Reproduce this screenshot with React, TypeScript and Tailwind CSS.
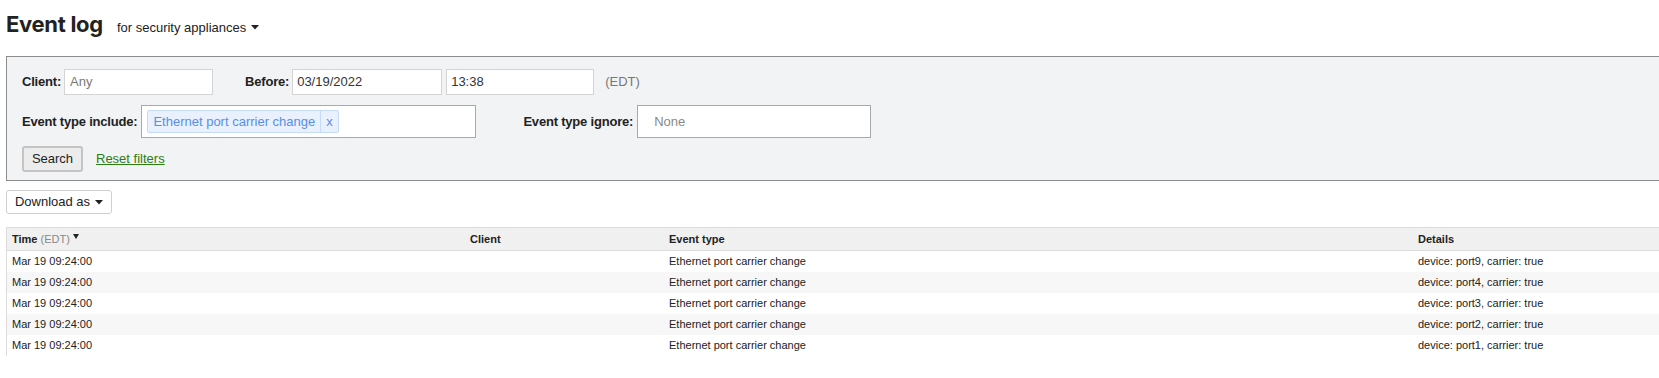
import React from "react";

type EventRow = {
    time: string;
    client: string;
    type: string;
    details: string;
};

const rows: EventRow[] = [
    { time: "Mar 19 09:24:00", client: "", type: "Ethernet port carrier change", details: "device: port9, carrier: true" },
    { time: "Mar 19 09:24:00", client: "", type: "Ethernet port carrier change", details: "device: port4, carrier: true" },
    { time: "Mar 19 09:24:00", client: "", type: "Ethernet port carrier change", details: "device: port3, carrier: true" },
    { time: "Mar 19 09:24:00", client: "", type: "Ethernet port carrier change", details: "device: port2, carrier: true" },
    { time: "Mar 19 09:24:00", client: "", type: "Ethernet port carrier change", details: "device: port1, carrier: true" },
];

function Caret() {
    return (
        <svg width="8" height="5" viewBox="0 0 8 5" className="inline-block">
            <path d="M0 0h8L4 4.5z" fill="#222" />
        </svg>
    );
}

const cols = "grid grid-cols-[458px_199px_749px_1fr]";

export default function App() {
    return (
        <div className="min-h-[378px] overflow-hidden bg-white text-[#222] font-['Liberation_Sans',Arial,sans-serif]">
            <div className="flex items-baseline gap-[14px] pl-[6px] pt-[8px] h-[56px]">
                <h1 className="text-[22px] font-bold tracking-[-0.3px] font-['Inter',sans-serif] text-[#222]">Event log</h1>
                <span className="flex items-center gap-[5px] text-[13px] text-[#222]">
                    for security appliances <Caret />
                </span>
            </div>

            <div className="ml-[6px] border-t border-l border-b border-[#8c8c8c] bg-[#f2f3f5] pl-[15px] pt-[12px] pb-[8px] text-[13px]">
                <div className="flex items-center h-[26px]">
                    <label className="mr-[3px] font-bold whitespace-nowrap tracking-[-0.2px]">Client:</label>
                    <div className="w-[149px] h-[26px] bg-white border border-[#d4d4d4] px-[5px] flex items-center text-[#777]">Any</div>
                    <label className="ml-[32px] mr-[3px] font-bold whitespace-nowrap tracking-[-0.2px]">Before:</label>
                    <div className="w-[150px] h-[26px] bg-white border border-[#d4d4d4] px-[4px] flex items-center text-[#333]">03/19/2022</div>
                    <div className="w-[148px] h-[26px] ml-[4px] bg-white border border-[#d4d4d4] px-[4px] flex items-center text-[#333]">13:38</div>
                    <span className="ml-[11px] text-[#777]">(EDT)</span>
                </div>

                <div className="flex items-center h-[33px] mt-[10px]">
                    <label className="mr-[4px] font-bold whitespace-nowrap tracking-[-0.2px]">Event type include:</label>
                    <div className="w-[335px] h-[33px] bg-white border border-[#a9a9a9] flex items-center pl-[5px]">
                        <div className="flex items-center h-[23px] rounded-[2px] border border-[#c5dbfa] bg-[#e8f1fd] text-[#5b8ee6]">
                            <span className="px-[5px] whitespace-nowrap">Ethernet port carrier change</span>
                            <span className="h-full border-l border-[#c5dbfa] px-[5px] flex items-center">x</span>
                        </div>
                    </div>
                    <label className="ml-[47px] mr-[4px] font-bold whitespace-nowrap tracking-[-0.2px]">Event type ignore:</label>
                    <div className="w-[234px] h-[33px] bg-white border border-[#a9a9a9] flex items-center pl-[16px] text-[#888]">None</div>
                </div>

                <div className="flex items-center mt-[8px] h-[26px]">
                    <button className="w-[61px] h-[26px] rounded-[3px] border-2 border-[#c4c4c4] bg-[#ececec] text-[13px] text-[#222]">Search</button>
                    <a className="ml-[13px] text-[#2d7d12] underline">Reset filters</a>
                </div>
            </div>

            <div className="ml-[6px] mt-[9px]">
                <button className="h-[24px] w-[106px] flex items-center justify-center gap-[5px] rounded-[3px] border border-[#cfcfcf] bg-white text-[13px] text-[#222]">
                    Download as <Caret />
                </button>
            </div>

            <div className="ml-[6px] mt-[13px] border-l border-t border-[#dcdcdc] text-[11px]">
                <div className={`${cols} h-[23px] items-center bg-[#f0f0f0] border-b border-[#dcdcdc] font-bold`}>
                    <div className="px-[5px] flex items-center gap-[3px]">
                        <span>Time</span>
                        <span className="font-normal text-[#888]">(EDT)</span>
                        <svg width="6" height="6" viewBox="0 0 6 6" className="mb-[5px]"><path d="M0 0h6L3 5z" fill="#222" /></svg>
                    </div>
                    <div className="px-[5px]">Client</div>
                    <div className="px-[5px]">Event type</div>
                    <div className="px-[5px]">Details</div>
                </div>
                {rows.map((r, i) => (
                    <div key={i} className={`${cols} h-[21px] items-center ${i % 2 === 1 ? "bg-[#f7f7f7]" : "bg-white"}`}>
                        <div className="px-[5px]">{r.time}</div>
                        <div className="px-[5px]">{r.client}</div>
                        <div className="px-[5px]">{r.type}</div>
                        <div className="px-[5px]">{r.details}</div>
                    </div>
                ))}
            </div>
        </div>
    );
}
